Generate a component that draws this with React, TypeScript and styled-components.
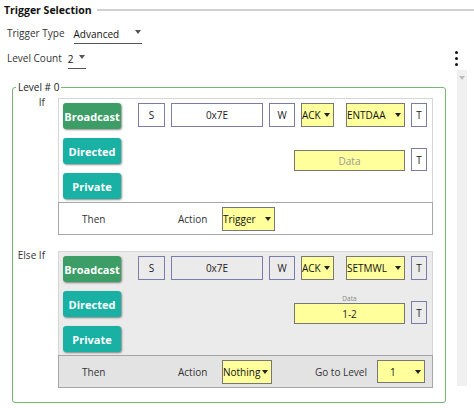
import React from 'react';
import styled, { createGlobalStyle } from 'styled-components';

const GlobalStyle = createGlobalStyle`
    body {
        margin: 0;
        background: #fff;
        font-family: "Open Sans", "Noto Sans", sans-serif;
        font-size: 10px;
        color: #222;
    }
`;

const Page = styled.div`
    width: 474px;
    height: 408px;
    overflow: hidden;
`;

const TitleBar = styled.div`
    display: flex;
    align-items: center;
    gap: 5px;
    height: 20px;
    padding-left: 4px;
`;

const Title = styled.div`
    font-weight: 700;
    font-size: 10.5px;
    color: #111;
`;

const TitleLine = styled.div`
    flex: 1;
    height: 2px;
    background: #d0d0d0;
`;

const SettingRow = styled.div<{ $h: number }>`
    display: flex;
    align-items: center;
    height: ${p => p.$h}px;
    padding-left: 7px;
    padding-right: 16px;
`;

const SettingLabel = styled.div<{ $mr?: number }>`
    color: #333;
    margin-right: ${p => p.$mr || 9}px;
`;

const Select = styled.div<{ $w: number }>`
    display: flex;
    align-items: center;
    justify-content: space-between;
    width: ${p => p.$w}px;
    height: 18px;
    margin-top: 3px;
    border-bottom: 1px solid #555;
    color: #111;
    & > svg {
        margin-top: -4px;
        margin-right: 1px;
    }
`;

const Kebab = styled.div`
    margin-left: auto;
    display: flex;
    flex-direction: column;
    gap: 3px;
    & > span {
        width: 3px;
        height: 3px;
        border-radius: 50%;
        background: #111;
    }
`;

const Main = styled.div`
    display: flex;
    align-items: flex-start;
    padding-left: 12px;
`;

const LevelBox = styled.fieldset`
    box-sizing: border-box;
    width: 434px;
    margin: 10px 0 0;
    padding: 4px 12px 14px 0;
    border: 1px solid #72b872;
    border-radius: 3px;
    min-width: 0;
`;

const Legend = styled.legend`
    margin-left: 3px;
    padding: 0 2px;
    line-height: 14px;
    color: #222;
`;

const Scrollbar = styled.div`
    width: 10px;
    height: 316px;
    margin-left: 11px;
    background: #f0f0f0;
    display: flex;
    justify-content: center;
    padding-top: 6px;
    box-sizing: border-box;
`;

const Section = styled.div<{ $gap?: number }>`
    display: flex;
    margin-top: ${p => p.$gap || 0}px;
`;

const SectionLabel = styled.div`
    width: 45px;
    box-sizing: border-box;
    padding-right: 13px;
    text-align: right;
    margin-top: -3px;
    color: #333;
`;

const Panel = styled.div`
    width: 375px;
    display: flex;
    flex-direction: column;
`;

const Upper = styled.div<{ $alt?: boolean }>`
    display: flex;
    padding: 4px 4px 3px 4px;
    border: 1px solid #d6d6d6;
    border-bottom: none;
    background: ${p => (p.$alt ? '#ebebeb' : '#fff')};
`;

const ButtonCol = styled.div`
    display: flex;
    flex-direction: column;
    gap: 9px;
`;

const ModeButton = styled.div<{ $active?: boolean }>`
    width: 58px;
    height: 26px;
    display: flex;
    align-items: center;
    justify-content: center;
    border-radius: 3px;
    background: ${p => (p.$active ? '#3c9d67' : '#19b1a4')};
    color: #fff;
    font-weight: 700;
    font-size: 11px;
    box-shadow: 1px 1px 2px rgba(0, 0, 0, 0.45);
`;

const Fields = styled.div`
    display: flex;
    flex-direction: column;
    margin-left: 17px;
`;

const FieldRow = styled.div`
    display: flex;
    gap: 6px;
    height: 24px;
`;

const Box = styled.div<{ $w: number; $h?: number }>`
    box-sizing: border-box;
    width: ${p => p.$w}px;
    height: ${p => p.$h || 24}px;
    border: 1px solid #7c7ca8;
    display: flex;
    align-items: center;
    justify-content: center;
    color: #222;
`;

const Drop = styled.div<{ $w: number; $h?: number; $ml?: number; $pad?: number }>`
    box-sizing: border-box;
    width: ${p => p.$w}px;
    height: ${p => p.$h || 24}px;
    margin-left: ${p => p.$ml || 0}px;
    padding-left: ${p => p.$pad || 0}px;
    padding-right: 3px;
    border: 1px solid #777;
    background: #ffff9c;
    display: flex;
    align-items: center;
    justify-content: space-between;
    color: #111;
`;

const DataRow = styled.div`
    display: flex;
    justify-content: flex-end;
    align-items: flex-end;
    gap: 6px;
    margin-top: 15px;
`;

const DataField = styled.div`
    display: flex;
    flex-direction: column;
    align-items: center;
    width: 111px;
`;

const DataCaption = styled.div`
    height: 8px;
    font-size: 6.5px;
    line-height: 8px;
    color: #888;
`;

const DataInput = styled.div<{ $empty?: boolean }>`
    box-sizing: border-box;
    width: 111px;
    height: 21px;
    border: 1px solid #777;
    background: #ffff9c;
    display: flex;
    align-items: center;
    justify-content: center;
    color: ${p => (p.$empty ? '#999' : '#222')};
`;

const ThenRow = styled.div<{ $alt?: boolean }>`
    box-sizing: border-box;
    height: 33px;
    display: flex;
    align-items: center;
    padding: 0 7px 0 23px;
    border: 1px solid #a6a6a6;
    background: ${p => (p.$alt ? '#e3e3e3' : '#fff')};
`;

const ThenText = styled.div`
    width: 96px;
    color: #333;
`;

const ActionText = styled.div`
    width: 44px;
    color: #333;
`;

const GotoText = styled.div`
    margin-left: auto;
    margin-right: 10px;
    color: #333;
`;

const Caret = ({ color = '#222' }: { color?: string }) => (
    <svg width="6" height="4" viewBox="0 0 6 4">
        <path d="M0 0 L6 0 L3 4 Z" fill={color} />
    </svg>
);

interface ConditionProps {
    label: string,
    alt?: boolean,
    command: string,
    data: string,
    action: string,
    gap?: number
}

const Condition = ({ label, alt, command, data, action, gap }: ConditionProps) => (
    <Section $gap={gap}>
        <SectionLabel>{label}</SectionLabel>
        <Panel>
            <Upper $alt={alt}>
                <ButtonCol>
                    <ModeButton $active>Broadcast</ModeButton>
                    <ModeButton>Directed</ModeButton>
                    <ModeButton>Private</ModeButton>
                </ButtonCol>
                <Fields>
                    <FieldRow>
                        <Box $w={27}>S</Box>
                        <Box $w={92}>0x7E</Box>
                        <Box $w={26}>W</Box>
                        <Drop $w={33}>ACK<Caret /></Drop>
                        <Drop $w={59} $ml={6}>{command}<Caret /></Drop>
                        <Box $w={16}>T</Box>
                    </FieldRow>
                    <DataRow>
                        <DataField>
                            <DataCaption>{data ? 'Data' : ''}</DataCaption>
                            <DataInput $empty={!data}>{data || 'Data'}</DataInput>
                        </DataField>
                        <Box $w={16} $h={23}>T</Box>
                    </DataRow>
                </Fields>
            </Upper>
            <ThenRow $alt={alt}>
                <ThenText>Then</ThenText>
                <ActionText>Action</ActionText>
                <Drop $w={action === 'Trigger' ? 53 : 50}>{action}<Caret /></Drop>
                {alt && (
                    <>
                        <GotoText>Go to Level</GotoText>
                        <Drop $w={48} $h={23} $pad={12}>1<Caret /></Drop>
                    </>
                )}
            </ThenRow>
        </Panel>
    </Section>
);

const App = () => (
    <Page>
        <GlobalStyle />
        <TitleBar>
            <Title>Trigger Selection</Title>
            <TitleLine />
        </TitleBar>
        <SettingRow $h={26}>
            <SettingLabel>Trigger Type</SettingLabel>
            <Select $w={68}>Advanced<Caret color="#555" /></Select>
        </SettingRow>
        <SettingRow $h={24}>
            <SettingLabel $mr={6}>Level Count</SettingLabel>
            <Select $w={18}>2<Caret color="#555" /></Select>
            <Kebab><span /><span /><span /></Kebab>
        </SettingRow>
        <Main>
            <LevelBox>
                <Legend>Level # 0</Legend>
                <Condition label="If" command="ENTDAA" data="" action="Trigger" />
                <Condition label="Else If" alt command="SETMWL" data="1-2" action="Nothing" gap={16} />
            </LevelBox>
            <Scrollbar>
                <Caret color="#bbb" />
            </Scrollbar>
        </Main>
    </Page>
);

export default App;
